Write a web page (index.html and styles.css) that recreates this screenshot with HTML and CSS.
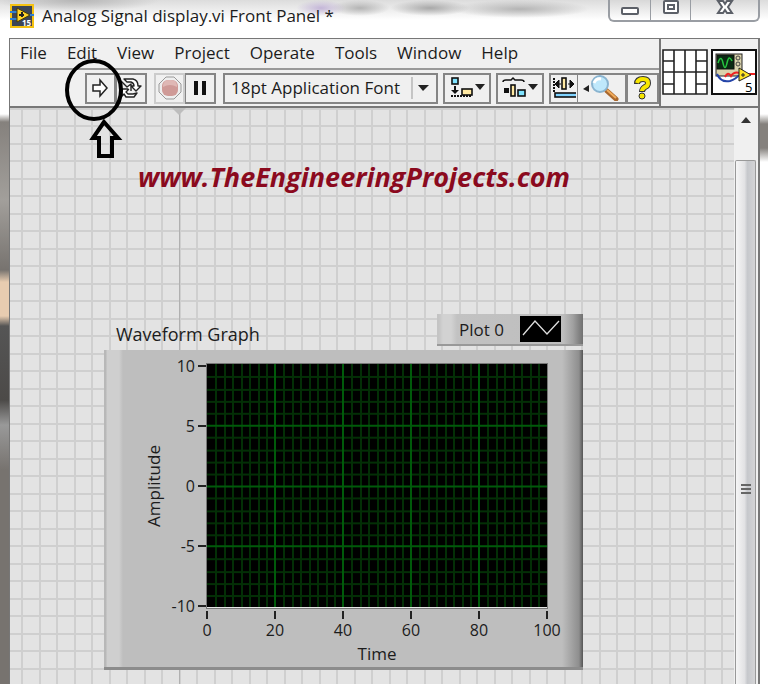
FILE: index.html
```html
<!DOCTYPE html>
<html lang="en">
<head>
    <meta charset="UTF-8">
    <meta name="viewport" content="width=device-width, initial-scale=1.0">
    <title>Analog Signal display.vi Front Panel</title>
    <link rel="stylesheet" href="styles.css">
</head>
<body>
    <div class="window">
        <header class="titlebar">
            <svg class="app-icon" width="24" height="24" viewBox="0 0 24 24">
                <rect x="1" y="1" width="22" height="22" fill="#3c4556" stroke="#f5c211" stroke-width="2"/>
                <path d="M0 8h8M0 15h8M18 11h6" stroke="#2f7fd0" stroke-width="2"/>
                <path d="M7 4v14l13-7z" fill="#ffd42a" stroke="#4a3b00"/>
                <path d="M9 11h5M12 8v5" stroke="#222" stroke-width="2"/>
                <text x="12" y="22" class="icon-num">15</text>
            </svg>
            <h1 class="title">Analog Signal display.vi Front Panel *</h1>
            <div class="window-controls">
                <button class="minimize" aria-label="Minimize">
                    <svg width="20" height="16"><rect x="2" y="8" width="16" height="6" rx="1" fill="#fff" stroke="#5c6068" stroke-width="2"/></svg>
                </button>
                <button class="restore" aria-label="Restore">
                    <svg width="20" height="16"><rect x="3" y="1" width="14" height="12" rx="1" fill="#fff" stroke="#5c6068" stroke-width="2"/><rect x="7" y="5" width="6" height="4" fill="#fff" stroke="#5c6068" stroke-width="2"/></svg>
                </button>
                <button class="close" aria-label="Close">
                    <svg width="20" height="16"><path d="M3 1h5l2 3 2-3h5l-4 6 4 6h-5l-2-3-2 3H3l4-6z" fill="#fff" stroke="#5c6068" stroke-width="2"/></svg>
                </button>
            </div>
        </header>

        <div class="frame">
            <div class="top">
                <div class="bars">
                    <nav class="menubar">
                        <button>File</button>
                        <button>Edit</button>
                        <button>View</button>
                        <button>Project</button>
                        <button>Operate</button>
                        <button>Tools</button>
                        <button>Window</button>
                        <button>Help</button>
                    </nav>
                    <div class="toolbar">
                        <div class="group">
                            <button class="tool run" aria-label="Run">
                                <svg width="20" height="20"><path d="M2 7h7V2l7 8-7 8v-5H2z" fill="#fff" stroke="#222" stroke-width="1.5"/></svg>
                            </button>
                            <button class="tool" aria-label="Run continuously">
                                <svg width="24" height="22" fill="#fff" stroke="#222" stroke-width="1.4" stroke-linejoin="round"><path d="M5 2h9q5 1 5 7h3l-5 5-5-5h3q0-3-3-4H8z"/><path d="M18 16l-3 4H7l-2-3-2 2v-7h7l-3 3 2 2h5z"/><path d="M2 4l6 6 4-3v7"/></svg>
                            </button>
                        </div>
                        <div class="group">
                            <button class="tool abort" aria-label="Abort execution">
                                <svg width="24" height="24"><path d="M8 1h8l7 7v8l-7 7H8l-7-7V8z" fill="#eee" stroke="#999"/><rect x="4" y="4" width="16" height="16" rx="6" fill="#cf9a97"/><path d="M5 11q7-4 14 0v-2q-1-5-6-5h-2q-5 0-6 5z" fill="#dfb8b5"/></svg>
                            </button>
                            <button class="tool pause" aria-label="Pause">
                                <svg width="16" height="16"><path d="M2 1h4v14H2zM10 1h4v14h-4z" fill="#111"/></svg>
                            </button>
                        </div>
                        <div class="font-box">
                            <select class="font-select" aria-label="Text settings">
                                <option>18pt Application Font</option>
                            </select>
                            <svg class="font-arrow" width="24" height="22"><path d="M1 0v22" stroke="#999"/><path d="M7 8h11l-6 6z" fill="#222"/></svg>
                        </div>
                        <button class="tool drop" aria-label="Align objects">
                            <svg width="38" height="24"><rect x="4" y="2" width="6" height="6" fill="#7fe3ff" stroke="#111" stroke-width="1.6"/><path d="M7 10v6" stroke="#111" stroke-width="2"/><path d="M3 14h8l-4 4z" fill="#111"/><path d="M3 20h20" stroke="#111" stroke-width="2" stroke-dasharray="2 1"/><rect x="14" y="13" width="10" height="6" fill="#ffe9a3" stroke="#111" stroke-width="1.6"/><path d="M27 8h10l-5 6z" fill="#222"/></svg>
                        </button>
                        <button class="tool drop" aria-label="Distribute objects">
                            <svg width="38" height="24"><path d="M2 6q0-2 3-2h5l2-2 2 2h6q3 0 3 2" fill="none" stroke="#111" stroke-width="1.5"/><path d="M3 12h5v5H3z" fill="#111"/><rect x="10" y="9" width="4" height="11" fill="#ffe9a3" stroke="#111" stroke-width="1.6"/><rect x="17" y="14" width="7" height="6" fill="#7fe3ff" stroke="#111" stroke-width="1.6"/><path d="M27 8h10l-5 6z" fill="#222"/></svg>
                        </button>
                        <div class="group">
                            <button class="tool resize" aria-label="Resize objects">
                                <svg width="24" height="24"><path d="M2 2v15" stroke="#111" stroke-width="2" stroke-dasharray="2 1"/><path d="M3 8h6M16 8h6M7 4L3 8l4 4zM18 4l4 4-4 4z" fill="#111" stroke="#111"/><rect x="10" y="2" width="4" height="11" fill="#ffe9a3" stroke="#111" stroke-width="1.6"/><rect x="3" y="17" width="22" height="4" fill="#7fd3ff" stroke="#111" stroke-width="1.6"/></svg>
                            </button>
                            <button class="tool search" aria-label="Search">
                                <svg width="42" height="26"><path d="M8 10v7l-6-3z" fill="#222"/><path d="M26 16l9 8" stroke="#a9682f" stroke-width="5" stroke-linecap="round"/><path d="M26 15l9 8" stroke="#f0ac5c" stroke-width="2"/><circle cx="19" cy="9" r="8" fill="#bfe8fb" stroke="#8ab4d0" stroke-width="2"/><path d="M13 8q2-5 7-4" fill="none" stroke="#fff" stroke-width="3"/></svg>
                            </button>
                            <button class="tool help" aria-label="Context help">
                                <svg width="20" height="24"><path d="M4 8q0-5 6-5 5 0 5 4 0 3-3 4-3 2-3 5" fill="none" stroke="#333" stroke-width="6"/><path d="M4 7q1-4 6-4 5 0 5 4 0 3-3 4-3 2-3 4" fill="none" stroke="#f7e600" stroke-width="4"/><circle cx="9" cy="20" r="3" fill="#f7e600" stroke="#333"/></svg>
                            </button>
                        </div>
                    </div>
                </div>
                <div class="vi-icons">
                    <svg width="46" height="46" viewBox="0 0 46 46"><path d="M1 1h44v44H1zM12 1v44M23 1v44M34 1v44M1 23h44M1 12h11M34 12h11M1 35h11M34 35h11" fill="#fff" stroke="#222" stroke-width="1.6"/></svg>
                    <svg width="46" height="46" viewBox="0 0 46 46">
                        <rect x="1" y="1" width="44" height="44" fill="#fff" stroke="#111" stroke-width="2"/>
                        <rect x="5" y="5" width="26" height="22" fill="#d9d2ac" stroke="#222"/>
                        <rect x="6" y="6" width="17" height="14" fill="#0b2a12" stroke="#111"/>
                        <path d="M7 14q3-9 5 0t4 0 5-2" fill="none" stroke="#27c33f" stroke-width="1.5"/>
                        <g fill="none" stroke="#444"><circle cx="27" cy="9" r="2"/><circle cx="27" cy="15" r="2"/></g>
                        <path d="M6 25q4 9 13 7 6-2 9-6" fill="none" stroke="#2544a8" stroke-width="2"/>
                        <path d="M14 28q3-6 6-1 3-5 9-3M38 25h6" fill="none" stroke="#e22" stroke-width="2"/>
                        <path d="M28 19v13l12-6z" fill="#ffe524" stroke="#222"/>
                        <path d="M30 26h4M32 24v4" stroke="#222"/>
                        <text x="34" y="43" class="vi-num">5</text>
                    </svg>
                </div>
            </div>

            <div class="workspace">
                <main class="canvas">
                    <div class="origin"></div>
                    <p class="watermark">www.TheEngineeringProjects.com</p>
                    <div class="graph-label">Waveform Graph</div>
                    <div class="legend">
                        <span>Plot 0</span>
                        <svg width="41" height="26"><rect width="41" height="26" fill="#000"/><path d="M3 19L15 5l12 13L39 5" fill="none" stroke="#ddd" stroke-width="1.3"/></svg>
                    </div>
                    <div class="graph">
                        <div class="y-title">Amplitude</div>
                        <div class="y-axis">
                            <span>10</span>
                            <span>5</span>
                            <span>0</span>
                            <span>-5</span>
                            <span>-10</span>
                        </div>
                        <svg class="plot" viewBox="0 0 340 244" preserveAspectRatio="none">
                            <defs>
                                <pattern id="cells" width="68" height="61" patternUnits="userSpaceOnUse">
                                    <path d="M9 0v61M18 0v61M26 0v61M35 0v61M43 0v61M52 0v61M60 0v61M0 13h68M0 26h68M0 38h68M0 50h68" stroke="#032f06" stroke-width="2"/>
                                </pattern>
                            </defs>
                            <rect width="340" height="244" fill="#000"/>
                            <rect width="340" height="244" fill="url(#cells)"/>
                            <path d="M68 0v244M136 0v244M204 0v244M272 0v244M0 62h340M0 123h340M0 183h340" stroke="#005a0a" stroke-width="2"/>
                        </svg>
                        <div class="x-axis">
                            <span>0</span>
                            <span>20</span>
                            <span>40</span>
                            <span>60</span>
                            <span>80</span>
                            <span>100</span>
                        </div>
                        <div class="x-title">Time</div>
                    </div>
                </main>
                <div class="scrollbar">
                    <button class="scroll-up" aria-label="Scroll up">
                        <svg width="12" height="8"><path d="M6 1l5 6H1z" fill="#333"/></svg>
                    </button>
                    <div class="thumb"><i></i><i></i><i></i></div>
                </div>
            </div>
        </div>

        <!-- marker round the run button -->
        <svg class="marker" width="60" height="104" viewBox="0 0 60 104" fill="none" stroke="#000">
            <ellipse cx="29" cy="31" rx="27" ry="29" stroke-width="4"/>
            <path d="M39 63L28 79h6v18h13V79h6z" stroke-width="4"/>
        </svg>
    </div>
</body>
</html>
```
FILE: styles.css
```css
* {
    box-sizing: border-box;
}

body {
    margin: 0;
    font-family: "Open Sans", "Noto Sans", sans-serif;
    font-size: 17px;
    color: #1c1c1c;
}

button {
    margin: 0;
    padding: 0;
    border: none;
    background: none;
    font: inherit;
    color: inherit;
}

svg {
    display: block;
}

.window {
    position: relative;
    display: flex;
    flex-direction: column;
    height: 100vh;
    padding: 0 8px 0 9px;
    overflow: hidden;
    background:
        linear-gradient(transparent 114px, #85817d 122px, #a29f9b 200px, #77736f 270px, #e8ccb0 282px, #e8ccb0 316px, #555 326px, #4c4a48 400px, #999 425px, #77736f 470px, #77736f) 0 0 / 9px 100% no-repeat,
        linear-gradient(transparent 114px, #85817d 124px, #85817d 148px, transparent 162px) 100% 0 / 8px 100% no-repeat,
        #fff;
}

/* title bar */
.titlebar {
    display: flex;
    align-items: flex-start;
    height: 38px;
    margin: 0 -8px 0 -9px;
    padding: 0 8px 0 10px;
    background:
        radial-gradient(ellipse at 77px 0, #b5b5b5, transparent 70%) 0 0 / 160px 12px no-repeat,
        radial-gradient(ellipse, #c4b6d8, transparent 70%) 296px 0 / 50px 16px no-repeat,
        radial-gradient(ellipse, #b4b4b4, transparent 70%) 330px 0 / 60px 16px no-repeat,
        radial-gradient(ellipse, #a8a8a8, transparent 70%) 390px 0 / 80px 16px no-repeat,
        radial-gradient(ellipse, #b4b4b4, transparent 70%) 450px 0 / 140px 18px no-repeat,
        linear-gradient(#dcdcdc, #fff 20px);
}

.app-icon {
    margin-top: 4px;
}

.icon-num {
    font: bold 8px "Open Sans", sans-serif;
    fill: #fff;
}

.title {
    flex: 1;
    margin: 4px 0 0 8px;
    font-size: 17px;
    font-weight: normal;
    line-height: 24px;
    white-space: nowrap;
}

.window-controls {
    display: flex;
    height: 22px;
    border: 2px solid #999da3;
    border-top: none;
    border-radius: 0 0 6px 6px;
    background: linear-gradient(#d8d8d8, #fff);
}

.window-controls button {
    display: flex;
    justify-content: center;
    width: 40px;
}

.window-controls button + button {
    border-left: 1px solid #999da3;
}

.window-controls .close {
    width: 68px;
}

/* menu and tool bars */
.frame {
    flex: 1;
    display: flex;
    flex-direction: column;
    min-height: 0;
    border: 1px solid #777;
    border-right-width: 2px;
    border-bottom: none;
    background: #f0f0f0;
}

.top {
    display: flex;
    border-bottom: 2px solid #777;
}

.bars {
    flex: 1;
}

.menubar {
    display: flex;
    gap: 20px;
    height: 31px;
    padding: 2px 10px;
    border-bottom: 2px solid #999;
    line-height: 24px;
}

.menubar button {
    height: 24px;
}

.toolbar {
    display: flex;
    align-items: center;
    justify-content: flex-end;
    gap: 5px;
    height: 36px;
}

.group {
    display: flex;
}

.group:first-child {
    margin-right: 2px;
}

.tool {
    display: flex;
    align-items: center;
    justify-content: center;
    width: 31px;
    height: 31px;
    border: 2px solid #858585;
}

.group .tool + .tool {
    border-left-width: 1px;
}

.group .abort {
    border-color: #ccc;
}

.group .pause {
    border-left-width: 2px;
}

.drop {
    width: 48px;
}

.resize {
    width: 28px;
    border-right: none;
}

.search {
    width: 50px;
}

.help {
    width: 32px;
}

.font-box {
    position: relative;
    width: 215px;
    margin: 0 0 0 2px;
}

.font-select {
    display: block;
    width: 100%;
    height: 31px;
    padding: 0 0 2px 6px;
    border: 2px solid #858585;
    border-radius: 0;
    background: #f0f0f0;
    appearance: none;
    font: inherit;
    color: inherit;
}

.font-arrow {
    position: absolute;
    top: 4px;
    right: 3px;
    pointer-events: none;
}

.vi-icons {
    display: flex;
    align-items: center;
    gap: 3px;
    padding: 0 1px 2px;
    border-left: 2px solid #777;
}

.vi-num {
    font: 13px "Open Sans", sans-serif;
    fill: #000;
}

/* front panel */
.workspace {
    flex: 1;
    display: flex;
    min-height: 0;
}

.canvas {
    position: relative;
    flex: 1;
    overflow: hidden;
    background-color: #e3e3e3;
    background-image:
        linear-gradient(90deg, #cfcfcf 2px, transparent 2px, transparent 18px, #cfcfcf 18px, #cfcfcf 20px, transparent 20px),
        linear-gradient(#cfcfcf 2px, transparent 2px, transparent 18px, #cfcfcf 18px, #cfcfcf 20px, transparent 20px);
    background-size: 35px 35px;
    background-position: 11px 17px;
}

.origin {
    position: absolute;
    top: 0;
    bottom: 0;
    left: 169px;
    width: 1px;
    background: #b0b0b0;
}

.origin::before {
    content: "";
    position: absolute;
    top: 0;
    left: -7px;
    border: 7px solid transparent;
    border-top-color: #bdbdbd;
    border-bottom: none;
}

.watermark {
    position: absolute;
    top: 51px;
    left: 128px;
    margin: 0;
    font: italic bold 27px/36px "Open Sans", sans-serif;
    color: #8b0a1e;
}

.graph-label {
    position: absolute;
    top: 214px;
    left: 106px;
    font-size: 18px;
    line-height: 24px;
}

.legend {
    position: absolute;
    top: 206px;
    left: 427px;
    display: flex;
    align-items: center;
    justify-content: flex-end;
    gap: 16px;
    width: 146px;
    height: 32px;
    padding-right: 22px;
    border-bottom: 2px solid #999;
    background: linear-gradient(90deg, #c4c4c4 2px, #d2d2d2 6px, #d2d2d2 14px, #c2c2c2 20px, #bebebe 126px, #a0a0a0 136px, #707070);
}

.graph {
    position: absolute;
    top: 242px;
    left: 94px;
    display: grid;
    grid-template-columns: 66px 37px 340px;
    grid-template-rows: 244px 34px 24px;
    width: 479px;
    height: 320px;
    padding-top: 14px;
    border-bottom: 3px solid #8c8c8c;
    background: linear-gradient(90deg, #b8b8b8 2px, #cfcfcf 3px, #cfcfcf 15px, #bebebe 19px, #bebebe 458px, #b0b0b0 463px, #8e8e8e 475px, #555 479px);
}

.y-title {
    justify-self: end;
    align-self: center;
    line-height: 24px;
    margin-right: 4px;
    writing-mode: vertical-rl;
    transform: rotate(180deg);
}

.y-axis {
    display: flex;
    flex-direction: column;
    justify-content: space-between;
    margin: -10px 1px -10px -10px;
    font-size: 16px;
    line-height: 24px;
}

.y-axis span {
    display: flex;
    align-items: center;
    justify-content: flex-end;
    gap: 3px;
}

.y-axis span::after {
    content: "";
    width: 8px;
    height: 2px;
    background: #222;
}

.plot {
    width: 100%;
    height: 100%;
    outline: 1px solid #777;
    border-bottom: 1px solid #e6e6e6;
}

.x-axis {
    grid-column: 3;
    display: flex;
    justify-content: space-between;
    margin: 3px -20px 0;
    font-size: 16px;
    line-height: 22px;
}

.x-axis span {
    width: 40px;
    text-align: center;
}

.x-axis span::before {
    content: "";
    display: block;
    width: 2px;
    height: 8px;
    margin: 0 auto;
    background: #222;
}

.x-title {
    grid-column: 3;
    line-height: 24px;
    text-align: center;
}

/* vertical scroll bar */
.scrollbar {
    display: flex;
    flex-direction: column;
    width: 24px;
    padding: 0 2px 0 1px;
    background: #f0f0f0;
}

.scroll-up {
    display: flex;
    align-items: center;
    justify-content: center;
    height: 24px;
    margin-bottom: 28px;
}

.thumb {
    flex: 1;
    display: flex;
    flex-direction: column;
    align-items: center;
    gap: 2px;
    padding-top: 323px;
    border: 1px solid #999;
    border-bottom: none;
    border-radius: 2px 2px 0 0;
    background: linear-gradient(90deg, #f6f6f6, #e2e2e4 45%, #c6c8cc 60%, #d4d4d6);
}

.thumb i {
    width: 10px;
    height: 2px;
    background: #666;
}

.marker {
    position: absolute;
    top: 59px;
    left: 65px;
}
```
